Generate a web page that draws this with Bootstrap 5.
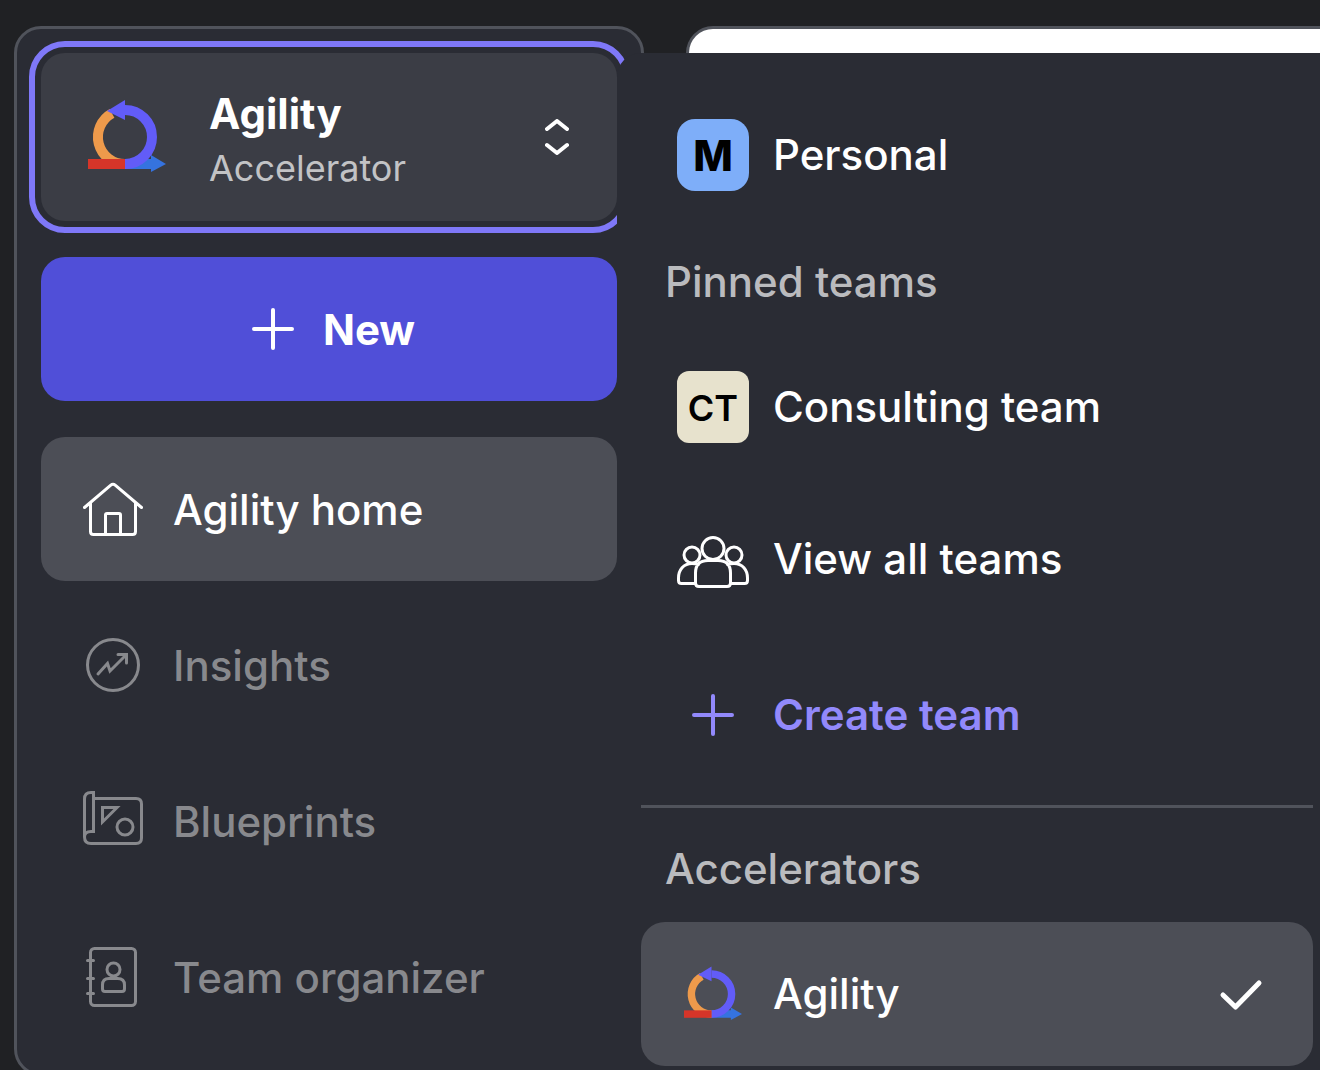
<!DOCTYPE html>
<html lang="en">
<head>
<meta charset="utf-8">
<meta name="viewport" content="width=device-width, initial-scale=1">
<title>Agility home</title>
<link href="https://cdn.jsdelivr.net/npm/bootstrap@5.3.0/dist/css/bootstrap.min.css" rel="stylesheet">
<style>
  :root {
    --page: #202124;
    --panel: #2a2c34;
    --line: #50535b;
    --selected: #4c4e56;
    --raised: #3b3d45;
    --muted: #88898d;
    --label: #babbbe;
    --accent: #504fd8;
    --accent-soft: #9289fb;
  }
  html, body { height: 100%; }
  body {
    background: var(--page);
    color: #fff;
    font-family: Inter, "Liberation Sans", sans-serif;
    font-size: 42px;
    font-weight: 450;
    line-height: 54px;
    overflow: hidden;
  }
  a { text-decoration: none; }
  svg { display: block; flex: none; }
  .stroke-icon { fill: none; stroke: currentColor; stroke-width: 3; stroke-linecap: round; stroke-linejoin: round; }
  .stroke-bold { stroke-width: 4; }
  .shell { padding: 26px 0 0 14px; gap: 42px; min-height: 100%; }
  .side-panel { width: 630px; flex: none; padding: 24px; border: 3px solid var(--line); border-radius: 27px; background: var(--panel); gap: 36px; }
  .canvas-panel { border: 3px solid var(--line); border-right: 0; border-radius: 27px 0 0 0; background: #fff; }
  .switcher { height: 168px; padding: 0 48px 0 47px; gap: 43px; background: var(--raised); border: 0; border-radius: 24px; color: #fff; outline: 6px solid #7f78f8; outline-offset: 6px; }
  .switcher-text { padding-top: 8px; }
  .switcher small { font-size: 36px; color: #c2c3c5; }
  .btn-new { height: 144px; padding: 2px 0 0 8px; gap: 28px; font-size: 42px; line-height: 54px; color: #fff; background: var(--accent); border: 0; border-radius: 24px; }
  .btn-new:hover { color: #fff; background: #4544c4; }
  .side-nav { gap: 12px; }
  .side-item { height: 144px; padding: 0 42px; gap: 30px; border-radius: 24px; color: var(--muted); }
  .side-item.active { background: var(--selected); color: #fff; }
  .side-item span { padding-top: 2px; }
  .team-menu { top: 53px; bottom: 0; left: 617px; right: -17px; padding: 30px 24px 0; border-radius: 24px 0 0 0; background: var(--panel); }
  .menu-row { height: 144px; padding: 0 48px 0 36px; gap: 24px; border-radius: 24px; color: #fff; }
  .menu-row.active { background: var(--selected); }
  .menu-row.create { margin-top: 12px; color: var(--accent-soft); }
  .menu-icon { width: 72px; flex: none; }
  .avatar { height: 72px; padding-top: 2px; border-radius: 18px; background: #7eaef9; color: #000; font-weight: 800; }
  .avatar.team { border-radius: 12px; background: #e7e2cd; font-size: 36px; font-weight: 600; }
  .menu-label { margin: 0; padding: 28px 24px 26px; font-size: 42px; line-height: 54px; font-weight: 450; color: var(--label); }
  .menu-rule { margin: 18px 0 6px; border-top: 3px solid var(--line); opacity: 1; }
</style>
</head>
<body>
<svg class="d-none" aria-hidden="true">
  <symbol id="agility-mark" viewBox="0 0 78 78">
    <path d="M37 71H63V74L78 66L63 57V61H37Z" fill="#3573df"/>
    <path d="M24 15.300A27 27 0 0 0 37 66" fill="none" stroke="#ee9a4b" stroke-width="10"/>
    <path d="M37 12A27 27 0 0 1 37 66" fill="none" stroke="#625cf8" stroke-width="10"/>
    <path d="M19 13L37 2V22Z" fill="#625cf8"/>
    <path d="M0 61H37V71H0Z" fill="#d63529"/>
  </symbol>
</svg>

<div class="shell d-flex">
  <aside class="side-panel d-flex flex-column">
    <button type="button" class="switcher d-flex align-items-center text-start" aria-haspopup="menu" aria-expanded="true">
      <svg width="78" height="78" aria-hidden="true"><use href="#agility-mark"/></svg>
      <span class="switcher-text d-flex flex-column flex-grow-1">
        <span class="fw-bold">Agility</span>
        <small>Accelerator</small>
      </span>
      <svg class="stroke-icon stroke-bold" width="24" height="36" viewBox="0 0 24 36" aria-hidden="true"><path d="M2 10L12 2L22 10M2 26L12 34L22 26"/></svg>
    </button>

    <button type="button" class="btn btn-new d-flex align-items-center justify-content-center fw-bold">
      <svg class="stroke-icon stroke-bold" width="44" height="44" viewBox="0 0 44 44" aria-hidden="true"><path d="M22 2V40M3 21H41"/></svg>
      New
    </button>

    <nav class="side-nav d-flex flex-column" aria-label="Main">
      <a href="#" class="side-item active d-flex align-items-center" aria-current="page">
        <svg class="stroke-icon" width="60" height="60" viewBox="0 0 60 60" aria-hidden="true"><path d="M1.500 28.500L27.500 6.300Q30 4.300 32.500 6.300L58.500 28.500M7.500 24V52.500Q7.500 55.500 10.500 55.500H49.500Q52.500 55.500 52.500 52.500V24M22.500 55V36Q22.500 34.500 24 34.500H36Q37.500 34.500 37.500 36V55"/></svg>
        <span>Agility home</span>
      </a>
      <a href="#" class="side-item d-flex align-items-center">
        <svg class="stroke-icon" width="60" height="60" viewBox="0 0 60 60" aria-hidden="true"><circle cx="30" cy="30" r="25.500"/><path stroke-linejoin="miter" d="M15 39L24.500 28.500L27 36L43.500 19.500M35 19.500H43.500V28"/></svg>
        <span>Insights</span>
      </a>
      <a href="#" class="side-item d-flex align-items-center">
        <svg class="stroke-icon" width="60" height="60" viewBox="0 0 60 60" aria-hidden="true"><path stroke-linejoin="miter" stroke-linecap="butt" d="M12 7.500H53Q58.500 7.500 58.500 13V47Q58.500 52.500 53 52.500H8Q1.500 52.500 1.500 46Q1.500 40.500 8 40.500H10.500V1.500H8Q1.500 1.500 1.500 8V46M19.500 16.500H34L19.500 31Z"/><circle cx="42" cy="36" r="8"/></svg>
        <span>Blueprints</span>
      </a>
      <a href="#" class="side-item d-flex align-items-center">
        <svg class="stroke-icon" width="60" height="60" viewBox="0 0 60 60" aria-hidden="true"><rect x="7.500" y="1.500" width="45" height="57" rx="4"/><path d="M4.500 13.500H10.500M4.500 31.500H10.500M4.500 46.500H10.500M19.500 42V38Q19.500 31.500 26 31.500H34.500Q41.500 31.500 41.500 38V42Q41.500 44.500 39 44.500H22Q19.500 44.500 19.500 42Z"/><circle cx="30.500" cy="22.500" r="6.500"/></svg>
        <span>Team organizer</span>
      </a>
    </nav>
  </aside>
  <main class="canvas-panel flex-grow-1"></main>
</div>

<nav class="team-menu position-absolute" aria-label="Teams">
  <a href="#" class="menu-row d-flex align-items-center">
    <span class="menu-icon avatar d-flex align-items-center justify-content-center">M</span>
    Personal
  </a>
  <h2 class="menu-label">Pinned teams</h2>
  <a href="#" class="menu-row d-flex align-items-center">
    <span class="menu-icon avatar team d-flex align-items-center justify-content-center">CT</span>
    Consulting team
  </a>
  <a href="#" class="menu-row d-flex align-items-center mt-2">
    <svg class="stroke-icon" width="72" height="60" viewBox="0 0 72 60" aria-hidden="true"><g transform="translate(0 5)"><circle cx="36" cy="14.500" r="11"/><circle cx="15" cy="21" r="8"/><circle cx="57" cy="21" r="8"/><path d="M18.500 49V39Q18.500 26.500 31 26.500H41Q53.500 26.500 53.500 39V49Q53.500 52.500 50 52.500H22Q18.500 52.500 18.500 49ZM21.500 30.500Q18.500 29.500 15 29.500C6.500 29.500 1.500 36 1.500 44V46.500Q1.500 49.500 4.500 49.500H17M50.500 30.500Q53.500 29.500 57 29.500C65.500 29.500 70.500 36 70.500 44V46.500Q70.500 49.500 67.500 49.500H55"/></g></svg>
    View all teams
  </a>
  <a href="#" class="menu-row create d-flex align-items-center fw-semibold">
    <svg class="stroke-icon stroke-bold" width="72" height="44" viewBox="0 0 72 44" aria-hidden="true"><path d="M36 3V41M17 22H55"/></svg>
    Create team
  </a>
  <hr class="menu-rule">
  <h2 class="menu-label">Accelerators</h2>
  <a href="#" class="menu-row active d-flex align-items-center" aria-current="true">
    <svg class="menu-icon" height="58" aria-hidden="true"><use href="#agility-mark"/></svg>
    <span class="flex-grow-1">Agility</span>
    <svg class="stroke-icon stroke-bold" width="48" height="36" viewBox="0 0 48 36" aria-hidden="true"><path stroke-width="5" d="M6 19L18.500 31L42 7"/></svg>
  </a>
</nav>
<script src="https://cdn.jsdelivr.net/npm/bootstrap@5.3.0/dist/js/bootstrap.bundle.min.js"></script>
</body>
</html>
